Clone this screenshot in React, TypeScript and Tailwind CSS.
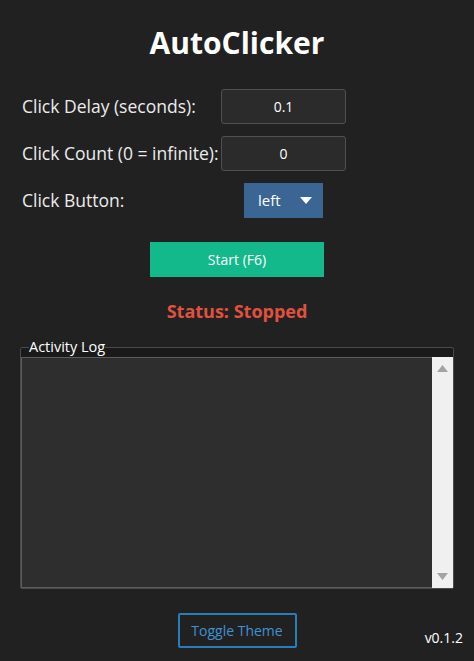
import React from "react";

const font = { fontFamily: '"Open Sans", "Noto Sans", sans-serif' };

export default function App() {
  return (
    <div
      className="w-[474px] h-[661px] bg-[#212121] text-[#ececec] flex flex-col overflow-hidden"
      style={font}
    >
      <h1 className="mt-[27px] h-[32px] text-center text-[30px] leading-[32px] font-bold text-white">
        AutoClicker
      </h1>

      <div className="mt-[30px] pl-[22px] grid grid-cols-[199px_125px] gap-y-[12px] items-center">
        <div className="text-[17.5px] leading-[35px] whitespace-nowrap">Click Delay (seconds):</div>
        <div className="h-[35px] rounded-[3px] border border-[#505050] bg-[#2b2b2b] flex items-center justify-center text-[14px] text-white">
          0.1
        </div>
        <div className="text-[17.5px] leading-[35px] whitespace-nowrap">Click Count (0 = infinite):</div>
        <div className="h-[35px] rounded-[3px] border border-[#505050] bg-[#2b2b2b] flex items-center justify-center text-[14px] text-white">
          0
        </div>
        <div className="text-[17.5px] leading-[35px] whitespace-nowrap">Click Button:</div>
        <div className="justify-self-center w-[79px] h-[35px] bg-[#3b6592] flex items-center justify-between pl-[14px] pr-[11px] text-[15px] text-white">
          <span>left</span>
          <svg width="12" height="7" viewBox="0 0 12 7">
            <polygon points="0,0 12,0 6,7" fill="#ffffff" />
          </svg>
        </div>
      </div>

      <div className="mt-[24px] flex justify-center">
        <div className="w-[174px] h-[35px] bg-[#13b98a] flex items-center justify-center text-[14px] text-white">
          Start (F6)
        </div>
      </div>

      <div className="mt-[25px] h-[18px] text-center text-[18px] leading-[18px] font-bold text-[#e0513f]">
        Status: Stopped
      </div>

      <fieldset className="mt-[17px] mx-5 border border-[#4a4a4a] rounded-[2px] bg-[#1a1a1a]">
        <legend className="ml-2 text-[14.5px] leading-[20px] text-white">Activity Log</legend>
        <div className="flex h-[231px]">
          <div className="flex-1 bg-[#2e2e2e] border border-r-0 border-[#5c5c5c]" />
          <div className="w-[21px] bg-[#f0f0f0] flex flex-col items-center justify-between py-[8px]">
            <svg width="11" height="7" viewBox="0 0 11 7">
              <polygon points="0,7 11,7 5.5,0" fill="#a3a3a3" />
            </svg>
            <svg width="11" height="7" viewBox="0 0 11 7">
              <polygon points="0,0 11,0 5.5,7" fill="#a3a3a3" />
            </svg>
          </div>
        </div>
      </fieldset>

      <div className="mt-[24px] grid grid-cols-[1fr_auto_1fr] items-end">
        <div />
        <div className="w-[119px] h-[35px] rounded-[2px] border-[2px] border-[#2b7cb8] flex items-center justify-center text-[14px] text-[#3d93d6]">
          Toggle Theme
        </div>
        <div className="justify-self-end pr-[11px] text-[14px] leading-[18px] text-white pb-[1px]">v0.1.2</div>
      </div>
    </div>
  );
}
